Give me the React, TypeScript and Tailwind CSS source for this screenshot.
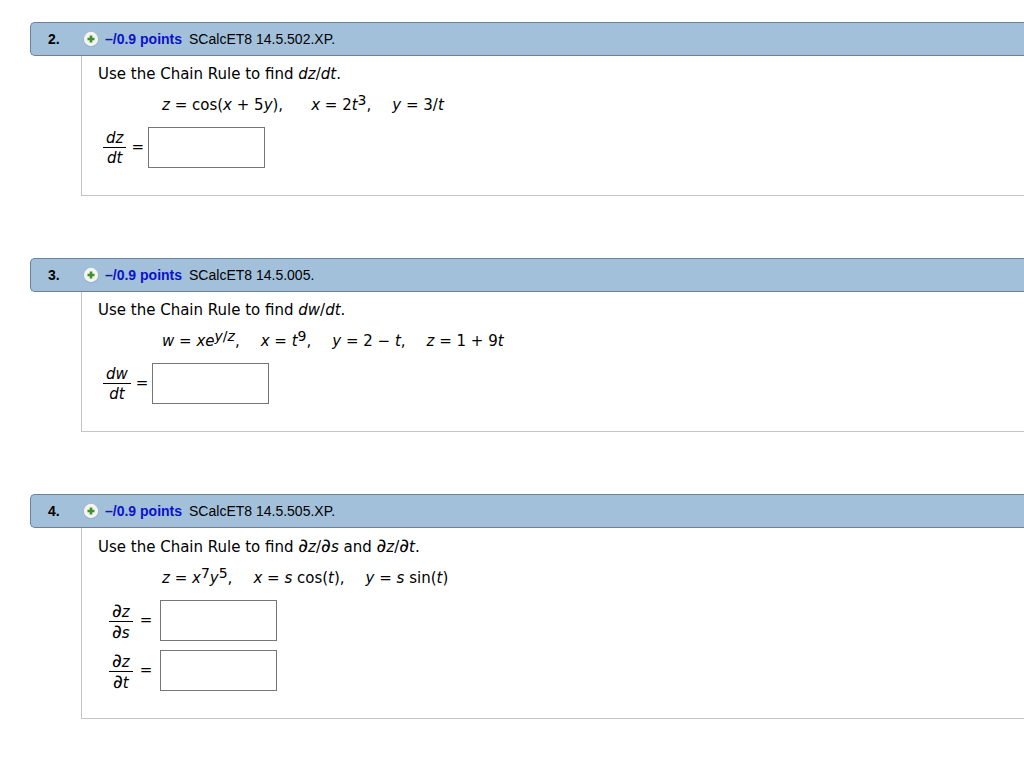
import type { ReactNode } from "react";

const Gap = () => <span className="inline-block w-[21px]" />;

const Sup = ({ children }: { children: ReactNode }) => (
  <sup className="top-[-5px] text-[14px]">{children}</sup>
);

const Partial = () => <span className="text-[19px] leading-none">∂</span>;

function PlusIcon() {
  return (
    <svg viewBox="0 0 16 16" className="size-4" aria-hidden="true">
      <circle cx="8" cy="8.4" r="7.6" fill="#7f9bb3" opacity="0.6" />
      <circle cx="8" cy="8" r="7.2" fill="#f4f4f2" />
      <path d="M6.7 4.5h2.6v2.2h2.2v2.6H9.3v2.2H6.7V9.3H4.5V6.7h2.2z" fill="#3c9127" />
    </svg>
  );
}

function Fraction({ top, bottom }: { top: ReactNode; bottom: ReactNode }) {
  return (
    <span className="flex flex-col text-center">
      <span className="border-b border-black px-[3px] pt-1 leading-[17px]">{top}</span>
      <span className="px-[3px] leading-[21px]">{bottom}</span>
    </span>
  );
}

function Answer({
  id,
  top,
  bottom,
  wide = false,
}: {
  id: string;
  top: ReactNode;
  bottom: ReactNode;
  wide?: boolean;
}) {
  return (
    <div className={wide ? "flex h-[43px] items-center pl-[11px]" : "flex h-[43px] items-center pl-[5px]"}>
      <label htmlFor={id} className={wide ? "flex items-center gap-[7px]" : "flex items-center gap-[5px]"}>
        <Fraction top={top} bottom={bottom} />
        <span>=</span>
      </label>
      <input
        id={id}
        type="text"
        className={
          wide
            ? "ml-2 h-[41px] w-[117px] border border-[#767676] bg-white px-2"
            : "ml-1 h-[41px] w-[117px] border border-[#767676] bg-white px-2"
        }
      />
    </div>
  );
}

function Question({
  number,
  source,
  prompt,
  formula,
  children,
}: {
  number: number;
  source: string;
  prompt: ReactNode;
  formula: ReactNode;
  children: ReactNode;
}) {
  return (
    <section>
      <header className="flex h-[34px] items-center rounded-l-[5px] border border-r-0 border-[#67829a] bg-[#a3c0da] pl-[17px] font-['Liberation_Sans',Arial,sans-serif] text-[14px]">
        <h2 className="w-[35px] font-bold">{number}.</h2>
        <button type="button" aria-label="Expand" className="mr-1.5">
          <PlusIcon />
        </button>
        <a href="#points" className="mr-[7px] font-bold text-[#0a12cc]">
          –/0.9 points
        </a>
        <span>{source}</span>
      </header>
      <div className="ml-[51px] border-b border-l border-[#c4c4c4] pt-2 pb-[26px] pl-4">
        <p className="leading-5">{prompt}</p>
        <p className="mt-[11px] mb-[11px] pl-16 leading-5">{formula}</p>
        {children}
      </div>
    </section>
  );
}

export default function App() {
  return (
    <main className="flex flex-col gap-[62px] overflow-hidden bg-white pt-[22px] pb-10 pl-[30px] font-['DejaVu_Sans',Verdana,sans-serif] text-[15px] text-black">
      <Question
        number={2}
        source="SCalcET8 14.5.502.XP."
        prompt={
          <>
            Use the Chain Rule to find <i>dz</i>/<i>dt</i>.
          </>
        }
        formula={
          <>
            <i>z</i> = cos(<i>x</i> + 5<i>y</i>),
            <span className="inline-block w-7" />
            <i>x</i> = 2<i>t</i>
            <Sup>3</Sup>,<Gap />
            <i>y</i> = 3/<i>t</i>
          </>
        }
      >
        <Answer id="dz-dt" top={<i>dz</i>} bottom={<i>dt</i>} />
      </Question>

      <Question
        number={3}
        source="SCalcET8 14.5.005."
        prompt={
          <>
            Use the Chain Rule to find <i>dw</i>/<i>dt</i>.
          </>
        }
        formula={
          <>
            <i>w</i> = <i>xe</i>
            <Sup>
              <i>y</i>/<i>z</i>
            </Sup>
            ,<Gap />
            <i>x</i> = <i>t</i>
            <Sup>9</Sup>,<Gap />
            <i>y</i> = 2 − <i>t</i>,<Gap />
            <i>z</i> = 1 + 9<i>t</i>
          </>
        }
      >
        <Answer id="dw-dt" top={<i>dw</i>} bottom={<i>dt</i>} />
      </Question>

      <Question
        number={4}
        source="SCalcET8 14.5.505.XP."
        prompt={
          <>
            Use the Chain Rule to find <Partial />
            <i>z</i>/<Partial />
            <i>s</i> and <Partial />
            <i>z</i>/<Partial />
            <i>t</i>.
          </>
        }
        formula={
          <>
            <i>z</i> = <i>x</i>
            <Sup>7</Sup>
            <i>y</i>
            <Sup>5</Sup>,<Gap />
            <i>x</i> = <i>s</i> cos(<i>t</i>),
            <Gap />
            <i>y</i> = <i>s</i> sin(<i>t</i>)
          </>
        }
      >
        <div className="flex flex-col gap-[7px]">
          <Answer id="dz-ds" wide top={<><Partial /><i>z</i></>} bottom={<><Partial /><i>s</i></>} />
          <Answer id="dz-dt-partial" wide top={<><Partial /><i>z</i></>} bottom={<><Partial /><i>t</i></>} />
        </div>
      </Question>
    </main>
  );
}
